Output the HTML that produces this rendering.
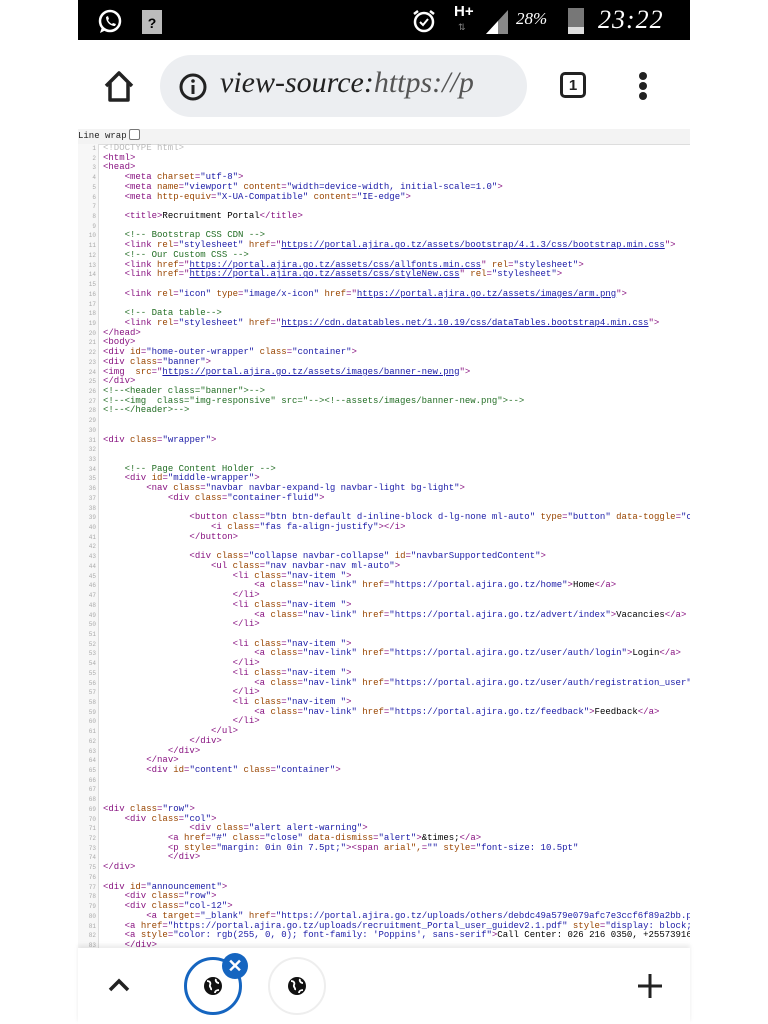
<!DOCTYPE html>
<html><head><meta charset="utf-8"><style>
body{margin:0;width:768px;height:1024px;background:#fff;position:relative;overflow:hidden;font-family:"Liberation Sans",sans-serif}
.a{position:absolute}
#sb{left:78px;top:0;width:612px;height:40px;background:#000;color:#fff}
#code{left:78px;top:144px;width:612px;height:804px;overflow:hidden}
.ln{position:absolute;left:0;top:0;width:18px;text-align:right;color:#aaa;font:6px/9.72px "Liberation Mono",monospace;border-right:1px solid #ddd;padding-right:2px;height:804px;background:#f7f7f7}
pre{position:absolute;left:25px;top:0;margin:0;font:9px/9.72px "Liberation Mono",monospace;color:#000;white-space:pre}
.t{color:#881280}.n{color:#994500}.v{color:#1a1aa6}.c{color:#236e25}.u{color:#1a1aa6;text-decoration:underline}.g{color:#bbb}
</style></head><body>
<div id="sb" class="a">
<svg class="a" style="left:18px;top:8px" width="28" height="28" viewBox="0 0 28 28"><circle cx="14" cy="13" r="10" fill="none" stroke="#fff" stroke-width="2.5"/><path d="M4 25l2-6 4 3z" fill="#fff"/><path d="M10 9c0 5 4 9 9 9l1-2-3-1-1 1c-2-1-3-2-4-4l1-1-1-3z" fill="#fff"/></svg>
<div class="a" style="left:64px;top:10px;width:20px;height:24px;background:#bbb;color:#000;font:bold 14px/26px 'Liberation Sans';text-align:center">?</div>
<svg class="a" style="left:332px;top:7px" width="28" height="28" viewBox="0 0 28 28"><circle cx="14" cy="15" r="9" fill="none" stroke="#fff" stroke-width="2.5"/><path d="M10 15l3 3 5-6" fill="none" stroke="#fff" stroke-width="2"/><path d="M4 7l4-3M24 7l-4-3" stroke="#fff" stroke-width="2.5"/></svg>
<div class="a" style="left:376px;top:3px;font:bold 15px 'Liberation Sans'">H+</div>
<div class="a" style="left:380px;top:22px;font:9px 'Liberation Sans';color:#888">⇅</div>
<svg class="a" style="left:406px;top:8px" width="24" height="26"><path d="M2 26L24 2V26Z" fill="#888"/><path d="M2 26L14 13V26Z" fill="#fff"/></svg>
<div class="a" style="left:438px;top:9px;font:italic 17px 'Liberation Serif'">28%</div>
<div class="a" style="left:490px;top:8px;width:16px;height:26px;background:#777"></div><div class="a" style="left:490px;top:27px;width:16px;height:7px;background:#ddd"></div>
<div class="a" style="left:520px;top:5px;font:italic 26px 'Liberation Serif';letter-spacing:1px">23:22</div>
</div>
<svg class="a" style="left:101px;top:69px" width="36" height="34" viewBox="0 0 36 34"><path d="M5 17L18 4 31 17M9 14V31H27V14" fill="none" stroke="#222" stroke-width="3.5" stroke-linejoin="round"/></svg>
<div class="a" style="left:160px;top:55px;width:367px;height:62px;border-radius:31px;background:#eceef1"></div>
<svg class="a" style="left:178px;top:72px" width="30" height="30" viewBox="0 0 30 30"><circle cx="15" cy="15" r="12" fill="none" stroke="#222" stroke-width="3"/><rect x="13.5" y="13" width="3" height="9" fill="#222"/><circle cx="15" cy="9" r="1.8" fill="#222"/></svg>
<div class="a" style="left:220px;top:66px;width:300px;overflow:hidden;white-space:nowrap;font:italic 30px 'Liberation Serif';color:#222">view-source:<span style="color:#555">https://p</span></div>
<div class="a" style="left:560px;top:72px;width:26px;height:26px;border:3px solid #222;border-radius:5px;box-sizing:border-box;font:bold 15px/21px 'Liberation Sans';text-align:center;color:#222">1</div>
<div class="a" style="left:639px;top:72px;width:8px;height:8px;border-radius:4px;background:#222"></div>
<div class="a" style="left:639px;top:82px;width:8px;height:8px;border-radius:4px;background:#222"></div>
<div class="a" style="left:639px;top:92px;width:8px;height:8px;border-radius:4px;background:#222"></div>
<div class="a" style="left:78px;top:129px;width:612px;height:15px;background:#f3f3f3;border-bottom:1px solid #ddd;font:9px/15px 'Liberation Mono',monospace;color:#222">Line wrap<span style="display:inline-block;width:9px;height:9px;border:1px solid #777;border-radius:2px;background:#fff;vertical-align:-2px;margin-left:2px"></span></div>
<div id="code" class="a">
<div class="ln">1<br>2<br>3<br>4<br>5<br>6<br>7<br>8<br>9<br>10<br>11<br>12<br>13<br>14<br>15<br>16<br>17<br>18<br>19<br>20<br>21<br>22<br>23<br>24<br>25<br>26<br>27<br>28<br>29<br>30<br>31<br>32<br>33<br>34<br>35<br>36<br>37<br>38<br>39<br>40<br>41<br>42<br>43<br>44<br>45<br>46<br>47<br>48<br>49<br>50<br>51<br>52<br>53<br>54<br>55<br>56<br>57<br>58<br>59<br>60<br>61<br>62<br>63<br>64<br>65<br>66<br>67<br>68<br>69<br>70<br>71<br>72<br>73<br>74<br>75<br>76<br>77<br>78<br>79<br>80<br>81<br>82<br>83</div>
<pre><span class="g">&lt;!DOCTYPE html&gt;</span>
<span class="t">&lt;html&gt;</span>
<span class="t">&lt;head&gt;</span>
    <span class="t">&lt;meta <span class="n">charset</span>=<span class="v">"utf-8"</span>&gt;</span>
    <span class="t">&lt;meta <span class="n">name</span>=<span class="v">"viewport"</span> <span class="n">content</span>=<span class="v">"width=device-width, initial-scale=1.0"</span>&gt;</span>
    <span class="t">&lt;meta <span class="n">http-equiv</span>=<span class="v">"X-UA-Compatible"</span> <span class="n">content</span>=<span class="v">"IE-edge"</span>&gt;</span>

    <span class="t">&lt;title&gt;</span>Recruitment Portal<span class="t">&lt;/title&gt;</span>

    <span class="c">&lt;!-- Bootstrap CSS CDN --&gt;</span>
    <span class="t">&lt;link <span class="n">rel</span>=<span class="v">"stylesheet"</span> <span class="n">href</span>="<span class="u">https://portal.ajira.go.tz/assets/bootstrap/4.1.3/css/bootstrap.min.css</span>"&gt;</span>
    <span class="c">&lt;!-- Our Custom CSS --&gt;</span>
    <span class="t">&lt;link <span class="n">href</span>="<span class="u">https://portal.ajira.go.tz/assets/css/allfonts.min.css</span>" <span class="n">rel</span>=<span class="v">"stylesheet"</span>&gt;</span>
    <span class="t">&lt;link <span class="n">href</span>="<span class="u">https://portal.ajira.go.tz/assets/css/styleNew.css</span>" <span class="n">rel</span>=<span class="v">"stylesheet"</span>&gt;</span>

    <span class="t">&lt;link <span class="n">rel</span>=<span class="v">"icon"</span> <span class="n">type</span>=<span class="v">"image/x-icon"</span> <span class="n">href</span>="<span class="u">https://portal.ajira.go.tz/assets/images/arm.png</span>"&gt;</span>

    <span class="c">&lt;!-- Data table--&gt;</span>
    <span class="t">&lt;link <span class="n">rel</span>=<span class="v">"stylesheet"</span> <span class="n">href</span>="<span class="u">https://cdn.datatables.net/1.10.19/css/dataTables.bootstrap4.min.css</span>"&gt;</span>
<span class="t">&lt;/head&gt;</span>
<span class="t">&lt;body&gt;</span>
<span class="t">&lt;div <span class="n">id</span>=<span class="v">"home-outer-wrapper"</span> <span class="n">class</span>=<span class="v">"container"</span>&gt;</span>
<span class="t">&lt;div <span class="n">class</span>=<span class="v">"banner"</span>&gt;</span>
<span class="t">&lt;img  <span class="n">src</span>="<span class="u">https://portal.ajira.go.tz/assets/images/banner-new.png</span>"&gt;</span>
<span class="t">&lt;/div&gt;</span>
<span class="c">&lt;!--&lt;header class="banner"&gt;--&gt;</span>
<span class="c">&lt;!--&lt;img  class="img-responsive" src="--&gt;&lt;!--assets/images/banner-new.png"&gt;--&gt;</span>
<span class="c">&lt;!--&lt;/header&gt;--&gt;</span>


<span class="t">&lt;div <span class="n">class</span>=<span class="v">"wrapper"</span>&gt;</span>


    <span class="c">&lt;!-- Page Content Holder --&gt;</span>
    <span class="t">&lt;div <span class="n">id</span>=<span class="v">"middle-wrapper"</span>&gt;</span>
        <span class="t">&lt;nav <span class="n">class</span>=<span class="v">"navbar navbar-expand-lg navbar-light bg-light"</span>&gt;</span>
            <span class="t">&lt;div <span class="n">class</span>=<span class="v">"container-fluid"</span>&gt;</span>

                <span class="t">&lt;button <span class="n">class</span>=<span class="v">"btn btn-default d-inline-block d-lg-none ml-auto"</span> <span class="n">type</span>=<span class="v">"button"</span> <span class="n">data-toggle</span>=<span class="v">"collapse"</span></span>
                    <span class="t">&lt;i <span class="n">class</span>=<span class="v">"fas fa-align-justify"</span>&gt;&lt;/i&gt;</span>
                <span class="t">&lt;/button&gt;</span>

                <span class="t">&lt;div <span class="n">class</span>=<span class="v">"collapse navbar-collapse"</span> <span class="n">id</span>=<span class="v">"navbarSupportedContent"</span>&gt;</span>
                    <span class="t">&lt;ul <span class="n">class</span>=<span class="v">"nav navbar-nav ml-auto"</span>&gt;</span>
                        <span class="t">&lt;li <span class="n">class</span>=<span class="v">"nav-item "</span>&gt;</span>
                            <span class="t">&lt;a <span class="n">class</span>=<span class="v">"nav-link"</span> <span class="n">href</span>=<span class="v">"https://portal.ajira.go.tz/home"</span>&gt;</span>Home<span class="t">&lt;/a&gt;</span>
                        <span class="t">&lt;/li&gt;</span>
                        <span class="t">&lt;li <span class="n">class</span>=<span class="v">"nav-item "</span>&gt;</span>
                            <span class="t">&lt;a <span class="n">class</span>=<span class="v">"nav-link"</span> <span class="n">href</span>=<span class="v">"https://portal.ajira.go.tz/advert/index"</span>&gt;</span>Vacancies<span class="t">&lt;/a&gt;</span>
                        <span class="t">&lt;/li&gt;</span>

                        <span class="t">&lt;li <span class="n">class</span>=<span class="v">"nav-item "</span>&gt;</span>
                            <span class="t">&lt;a <span class="n">class</span>=<span class="v">"nav-link"</span> <span class="n">href</span>=<span class="v">"https://portal.ajira.go.tz/user/auth/login"</span>&gt;</span>Login<span class="t">&lt;/a&gt;</span>
                        <span class="t">&lt;/li&gt;</span>
                        <span class="t">&lt;li <span class="n">class</span>=<span class="v">"nav-item "</span>&gt;</span>
                            <span class="t">&lt;a <span class="n">class</span>=<span class="v">"nav-link"</span> <span class="n">href</span>=<span class="v">"https://portal.ajira.go.tz/user/auth/registration_user"</span>&gt;</span>Register<span class="t">&lt;/a&gt;</span>
                        <span class="t">&lt;/li&gt;</span>
                        <span class="t">&lt;li <span class="n">class</span>=<span class="v">"nav-item "</span>&gt;</span>
                            <span class="t">&lt;a <span class="n">class</span>=<span class="v">"nav-link"</span> <span class="n">href</span>=<span class="v">"https://portal.ajira.go.tz/feedback"</span>&gt;</span>Feedback<span class="t">&lt;/a&gt;</span>
                        <span class="t">&lt;/li&gt;</span>
                    <span class="t">&lt;/ul&gt;</span>
                <span class="t">&lt;/div&gt;</span>
            <span class="t">&lt;/div&gt;</span>
        <span class="t">&lt;/nav&gt;</span>
        <span class="t">&lt;div <span class="n">id</span>=<span class="v">"content"</span> <span class="n">class</span>=<span class="v">"container"</span>&gt;</span>



<span class="t">&lt;div <span class="n">class</span>=<span class="v">"row"</span>&gt;</span>
    <span class="t">&lt;div <span class="n">class</span>=<span class="v">"col"</span>&gt;</span>
                <span class="t">&lt;div <span class="n">class</span>=<span class="v">"alert alert-warning"</span>&gt;</span>
            <span class="t">&lt;a <span class="n">href</span>=<span class="v">"#"</span> <span class="n">class</span>=<span class="v">"close"</span> <span class="n">data-dismiss</span>=<span class="v">"alert"</span>&gt;</span>&amp;times;<span class="t">&lt;/a&gt;</span>
            <span class="t">&lt;p <span class="n">style</span>=<span class="v">"margin: 0in 0in 7.5pt;"</span>&gt;&lt;span <span class="n">arial",</span>=<span class="v">""</span> <span class="n">style</span>=<span class="v">"font-size: 10.5pt"</span></span>
            <span class="t">&lt;/div&gt;</span>
<span class="t">&lt;/div&gt;</span>

<span class="t">&lt;div <span class="n">id</span>=<span class="v">"announcement"</span>&gt;</span>
    <span class="t">&lt;div <span class="n">class</span>=<span class="v">"row"</span>&gt;</span>
    <span class="t">&lt;div <span class="n">class</span>=<span class="v">"col-12"</span>&gt;</span>
        <span class="t">&lt;a <span class="n">target</span>=<span class="v">"_blank"</span> <span class="n">href</span>=<span class="v">"https://portal.ajira.go.tz/uploads/others/debdc49a579e079afc7e3ccf6f89a2bb.pdf"</span></span>
    <span class="t">&lt;a <span class="n">href</span>=<span class="v">"https://portal.ajira.go.tz/uploads/recruitment_Portal_user_guidev2.1.pdf"</span> <span class="n">style</span>=<span class="v">"display: block;</span></span>
    <span class="t">&lt;a <span class="n">style</span>=<span class="v">"color: rgb(255, 0, 0); font-family: 'Poppins', sans-serif"</span>&gt;</span>Call Center: 026 216 0350, +255739162
    <span class="t">&lt;/div&gt;</span></pre>
</div>
<div class="a" style="left:78px;top:948px;width:612px;height:76px;background:#fff;box-shadow:0 -3px 4px rgba(0,0,0,0.08)"></div>
<svg class="a" style="left:108px;top:978px" width="22" height="14"><path d="M2 12L11 3 20 12" fill="none" stroke="#222" stroke-width="3.5"/></svg>
<div class="a" style="left:184px;top:957px;width:58px;height:58px;border:3px solid #1565c0;border-radius:50%;box-sizing:border-box"></div>
<div class="a" style="left:222px;top:953px;width:26px;height:26px;border-radius:50%;background:#1565c0;color:#fff;font:bold 18px/26px 'Liberation Sans';text-align:center">✕</div>
<div class="a" style="left:268px;top:957px;width:58px;height:58px;border:2px solid #eee;border-radius:50%;box-sizing:border-box"></div>
<svg class="a" style="left:202px;top:975px" width="22" height="22" viewBox="0 0 22 22"><circle cx="11" cy="11" r="9" fill="#111"/><path d="M5 6c3 0 4 2 3 4s2 3 1 5M14 4c-1 2 1 4 3 4M13 18c0-2 2-3 4-3" fill="none" stroke="#fff" stroke-width="1.8"/></svg>
<svg class="a" style="left:286px;top:975px" width="22" height="22" viewBox="0 0 22 22"><circle cx="11" cy="11" r="9" fill="#111"/><path d="M5 6c3 0 4 2 3 4s2 3 1 5M14 4c-1 2 1 4 3 4M13 18c0-2 2-3 4-3" fill="none" stroke="#fff" stroke-width="1.8"/></svg>
<svg class="a" style="left:637px;top:973px" width="26" height="26"><path d="M13 1V25M1 13H25" stroke="#222" stroke-width="3"/></svg>
</body></html>
